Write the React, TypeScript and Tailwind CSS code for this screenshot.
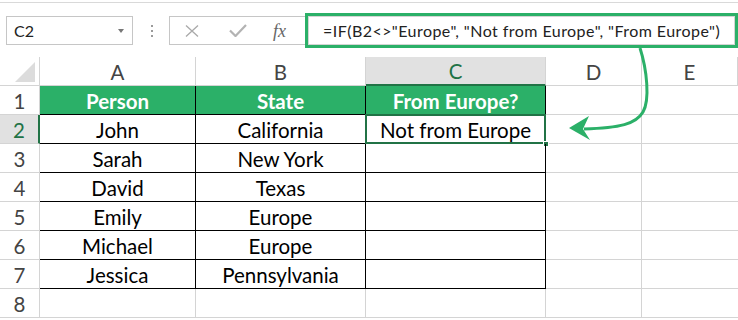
import React from "react";

const GREEN = "#2bb068";

const rows: [string, string, string][] = [
  ["Person", "State", "From Europe?"],
  ["John", "California", "Not from Europe"],
  ["Sarah", "New York", ""],
  ["David", "Texas", ""],
  ["Emily", "Europe", ""],
  ["Michael", "Europe", ""],
  ["Jessica", "Pennsylvania", ""],
  ["", "", ""],
];

const font = { fontFamily: "Lato, 'Open Sans', sans-serif" };

export default function App() {
  return (
    <div className="relative w-[738px] h-[320px] overflow-hidden bg-white" style={font}>
      <div className="mt-[2px] h-px bg-[#d9d9d9]" />
      {/* formula bar */}
      <div className="mt-[10px] h-[35px] flex items-center">
        <div className="ml-[6px] w-[127px] h-[29px] border border-[#c6c6c6] flex items-center justify-between pl-[7px] pr-[8px] text-[16px] text-[#222]">
          <span>C2</span>
          <span className="w-0 h-0 border-l-[3px] border-r-[3px] border-t-[4px] border-l-transparent border-r-transparent border-t-[#777]" />
        </div>
        <div className="ml-[18px] w-[2px] flex flex-col gap-[3px]">
          <span className="w-[2px] h-[2px] bg-[#9a9a9a]" />
          <span className="w-[2px] h-[2px] bg-[#9a9a9a]" />
          <span className="w-[2px] h-[2px] bg-[#9a9a9a]" />
        </div>
        <div className="ml-[16px] w-[137px] h-[29px] border border-[#c6c6c6] border-r-0 flex items-center">
          <svg width="16" height="12" viewBox="0 0 16 12" className="ml-[14px]">
            <path d="M2 0.5 L14 11.5 M14 0.5 L2 11.5" stroke="#a9a9a9" strokeWidth="1.3" fill="none" />
          </svg>
          <svg width="18" height="13" viewBox="0 0 18 13" className="ml-[29px]">
            <path d="M1 6.5 L6.5 12 L17 1" stroke="#b3b3b3" strokeWidth="2.2" fill="none" />
          </svg>
          <span className="ml-[26px] text-[18px] italic text-[#666] leading-none" style={{ fontFamily: "'Liberation Serif', serif" }}>
            fx
          </span>
        </div>
        <div className="-ml-px flex-1 h-[35px] border-[3px] p-0" style={{ borderColor: GREEN }}>
          <div className="h-full border border-[#d4d4d4] flex items-center pl-[14px] text-[16px] tracking-[0.45px] text-[#222] whitespace-nowrap">
            =IF(B2&lt;&gt;"Europe", "Not from Europe", "From Europe")
          </div>
        </div>
      </div>
      {/* grid */}
      <div className="mt-[9px] grid grid-cols-[40px_156px_170px_180px_96px_1fr] text-[20.5px]">
        {/* header row */}
        <div className="relative h-[29px] border-r border-b border-[#d4d4d4]">
          <svg className="absolute right-[4px] bottom-[3px]" width="20" height="20" viewBox="0 0 20 20">
            <polygon points="20,0 20,20 0,20" fill="#dcdcdc" />
          </svg>
        </div>
        {["A", "B", "C", "D", "E"].map((c) => (
          <div
            key={c}
            className={
              c === "C"
                ? "h-[29px] pt-[2px] flex items-center justify-center bg-[#e1e1e1] text-[#217346] border-r border-r-[#d4d4d4] border-b-2 border-b-[#217346]"
                : "h-[29px] pt-[2px] flex items-center justify-center text-[#444] border-r border-b border-[#d4d4d4]"
            }
          >
            {c}
          </div>
        ))}
        {rows.map((r, i) => {
          const n = i + 1;
          const inTable = n <= 7;
          const head = n === 1;
          return (
            <React.Fragment key={n}>
              <div
                className={
                  n === 2
                    ? "h-[29px] pt-[2px] flex items-center justify-center bg-[#e1e1e1] text-[#217346] border-r-2 border-r-[#217346] border-b border-b-[#d4d4d4]"
                    : "h-[29px] pt-[2px] flex items-center justify-center text-[#444] border-r border-b border-[#d4d4d4]"
                }
              >
                {n}
              </div>
              {r.map((t, j) => (
                <div
                  key={j}
                  className={
                    (inTable ? "border-r border-b border-black " : "border-r border-b border-[#d4d4d4] ") +
                    (head ? "font-bold text-white " : "text-black ") +
                    "relative h-[29px] pt-[2px] flex items-center justify-center whitespace-nowrap"
                  }
                  style={head ? { backgroundColor: GREEN } : undefined}
                >
                  {t}
                  {n === 2 && j === 2 && (
                    <>
                      <div className="absolute -left-px -top-px w-[181px] h-[30px] border-2 border-[#217346]" />
                      <div className="absolute -right-[4px] -bottom-[4px] w-[6px] h-[6px] bg-[#217346] border border-white" />
                    </>
                  )}
                </div>
              ))}
              <div className="h-[29px] border-r border-b border-[#d4d4d4]" />
              <div className="h-[29px] border-b border-[#d4d4d4]" />
            </React.Fragment>
          );
        })}
      </div>
      {/* arrow */}
      <svg className="absolute left-0 top-0 pointer-events-none" width="738" height="320">
        <path d="M640 48 C647 70, 650 100, 643 112 C636 124, 620 128, 584 129" stroke={GREEN} strokeWidth="3" fill="none" />
        <polygon points="569,128 589,116 583,129 590,140" fill={GREEN} />
      </svg>
    </div>
  );
}
